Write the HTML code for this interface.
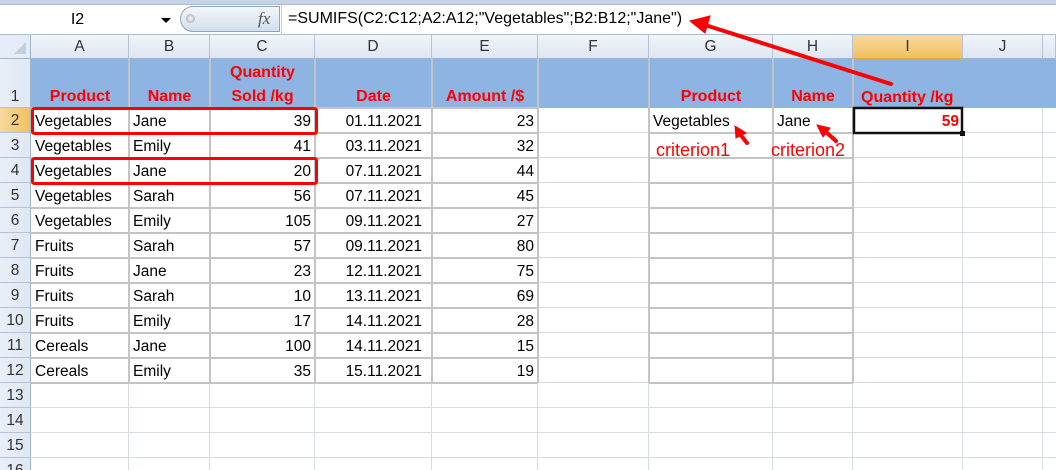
<!DOCTYPE html>
<html><head><meta charset="utf-8"><style>
*{margin:0;padding:0;box-sizing:border-box}
html,body{width:1056px;height:470px;overflow:hidden}
body{background:#fff;font-family:"Liberation Sans",Arial,sans-serif;position:relative}
.a{position:absolute}
.t{position:absolute;font-size:15.5px;line-height:25px;white-space:nowrap;color:#000}
.r{text-align:right}
.h{position:absolute;top:35px;height:24px;background:linear-gradient(#f1f5fb,#dde6f2);border-right:1px solid #b6c3d6;border-bottom:1px solid #9eb6ce;font-size:15.5px;line-height:24px;text-align:center;color:#333}
.rh{position:absolute;left:0;width:31px;background:linear-gradient(90deg,#e9eff8,#dfe7f3);border-right:1px solid #9eb6ce;border-bottom:1px solid #b6c3d6;font-size:15.5px;text-align:center;color:#333}
.hd{position:absolute;font-size:16px;font-weight:bold;color:#f00;text-align:center;line-height:25px}
.vl{position:absolute;width:1px;background:#d6dbe5}
.hl{position:absolute;height:1px;background:#d6dbe5;left:31px;right:0}
</style></head><body>
<div class="a" style="left:0;top:0;width:1056px;height:5px;background:#c5d3e6;border-bottom:1px solid #a9bdd6"></div>
<div class="a" style="left:0;top:5px;width:1056px;height:30px;background:#fff;border-bottom:1px solid #a9bdd6"></div>
<div class="t" style="left:0;top:7px;width:155px;text-align:center;line-height:26px;font-size:16px">I2</div>
<div class="a" style="left:161px;top:18px;width:0;height:0;border-left:5px solid transparent;border-right:5px solid transparent;border-top:5px solid #000"></div>
<div class="a" style="left:180px;top:6px;width:100px;height:26px;border:1px solid #8ea4c0;border-radius:13px 0 0 13px;background:linear-gradient(#f4f7fb,#d3deec)"></div>
<div class="a" style="left:186px;top:14px;width:9px;height:9px;border-radius:50%;background:radial-gradient(#fff,#999)"></div>
<div class="a" style="left:258px;top:7px;font-family:'Liberation Serif',serif;font-style:italic;font-size:17px;color:#555;line-height:24px">fx</div>
<div class="a" style="left:281px;top:5px;width:1px;height:30px;background:#c8d3e0"></div>
<div class="t" style="left:288px;top:6px;line-height:26px;font-size:16px">=SUMIFS(C2:C12;A2:A12;"Vegetables";B2:B12;"Jane")</div>

<div class="a" style="left:0;top:35px;width:31px;height:24px;background:#e4ecf7;border-right:1px solid #9eb6ce;border-bottom:1px solid #9eb6ce"></div>
<div class="a" style="left:14px;top:42px;width:0;height:0;border-left:12px solid transparent;border-bottom:12px solid #c3cfdf"></div>
<div class="h" style="left:31px;width:98px">A</div>
<div class="h" style="left:129px;width:81px">B</div>
<div class="h" style="left:210px;width:105px">C</div>
<div class="h" style="left:315px;width:117px">D</div>
<div class="h" style="left:432px;width:106px">E</div>
<div class="h" style="left:538px;width:111px">F</div>
<div class="h" style="left:649px;width:124px">G</div>
<div class="h" style="left:773px;width:80px">H</div>
<div class="h" style="left:853px;width:110px;background:linear-gradient(#f9d99f,#f1c15f);border-bottom:1px solid #e4a83c">I</div>
<div class="h" style="left:963px;width:80px">J</div>
<div class="h" style="left:1043px;width:13px"></div>

<div class="rh" style="top:59px;height:49px;line-height:76px">1</div>
<div class="rh" style="top:108px;height:25px;line-height:26px;background:linear-gradient(90deg,#f9d99f,#f1c15f)">2</div>
<div class="rh" style="top:133px;height:25px;line-height:26px">3</div>
<div class="rh" style="top:158px;height:25px;line-height:26px">4</div>
<div class="rh" style="top:183px;height:25px;line-height:26px">5</div>
<div class="rh" style="top:208px;height:25px;line-height:26px">6</div>
<div class="rh" style="top:233px;height:25px;line-height:26px">7</div>
<div class="rh" style="top:258px;height:25px;line-height:26px">8</div>
<div class="rh" style="top:283px;height:25px;line-height:26px">9</div>
<div class="rh" style="top:308px;height:25px;line-height:26px">10</div>
<div class="rh" style="top:333px;height:25px;line-height:26px">11</div>
<div class="rh" style="top:358px;height:25px;line-height:26px">12</div>
<div class="rh" style="top:383px;height:25px;line-height:26px">13</div>
<div class="rh" style="top:408px;height:25px;line-height:26px">14</div>
<div class="rh" style="top:433px;height:25px;line-height:26px">15</div>
<div class="rh" style="top:458px;height:25px;line-height:26px;border-bottom:none">16</div>

<div class="vl" style="left:128px;top:59px;height:411px"></div>
<div class="vl" style="left:209px;top:59px;height:411px"></div>
<div class="vl" style="left:314px;top:59px;height:411px"></div>
<div class="vl" style="left:431px;top:59px;height:411px"></div>
<div class="vl" style="left:537px;top:59px;height:411px"></div>
<div class="vl" style="left:648px;top:59px;height:411px"></div>
<div class="vl" style="left:772px;top:59px;height:411px"></div>
<div class="vl" style="left:852px;top:59px;height:411px"></div>
<div class="vl" style="left:962px;top:59px;height:411px"></div>
<div class="vl" style="left:1042px;top:59px;height:411px"></div>
<div class="hl" style="top:132px"></div><div class="hl" style="top:157px"></div><div class="hl" style="top:182px"></div>
<div class="hl" style="top:207px"></div><div class="hl" style="top:232px"></div><div class="hl" style="top:257px"></div>
<div class="hl" style="top:282px"></div><div class="hl" style="top:307px"></div><div class="hl" style="top:332px"></div>
<div class="hl" style="top:357px"></div><div class="hl" style="top:382px"></div><div class="hl" style="top:407px"></div>
<div class="hl" style="top:432px"></div><div class="hl" style="top:457px"></div>

<div class="a" style="left:31px;top:59px;width:1025px;height:49px;background:#8db4e2"></div>

<svg class="a" style="left:0;top:0" width="1056" height="470">
<g stroke="#c4c4c4" stroke-width="2" fill="none">
<path d="M129 59V383M210 59V383M315 59V383M432 59V383M538 59V383"/>
<path d="M31 108H538M31 133H538M31 158H538M31 183H538M31 208H538M31 233H538M31 258H538M31 283H538M31 308H538M31 333H538M31 358H538M31 383H538"/>
<path d="M649 59V383M773 59V383M853 59V383"/>
<path d="M649 133H853M649 158H853M649 183H853M649 208H853M649 233H853M649 258H853M649 283H853M649 308H853M649 333H853M649 358H853M649 383H853"/>
</g>
</svg>

<div class="hd" style="left:31px;top:84px;width:98px">Product</div>
<div class="hd" style="left:129px;top:84px;width:81px">Name</div>
<div class="hd" style="left:210px;top:60px;width:105px">Quantity</div>
<div class="hd" style="left:210px;top:84px;width:105px">Sold /kg</div>
<div class="hd" style="left:315px;top:84px;width:117px">Date</div>
<div class="hd" style="left:432px;top:84px;width:106px">Amount /$</div>
<div class="hd" style="left:649px;top:84px;width:124px">Product</div>
<div class="hd" style="left:773px;top:84px;width:80px">Name</div>
<div class="hd" style="left:853px;top:85px;width:110px;text-align:left;padding-left:8px">Quantity /kg</div>

<div class="t" style="left:35px;top:109px">Vegetables</div><div class="t" style="left:133px;top:109px">Jane</div><div class="t r" style="left:210px;top:109px;width:101px">39</div><div class="t r" style="left:315px;top:109px;width:107px">01.11.2021</div><div class="t r" style="left:432px;top:109px;width:102px">23</div>
<div class="t" style="left:35px;top:134px">Vegetables</div><div class="t" style="left:133px;top:134px">Emily</div><div class="t r" style="left:210px;top:134px;width:101px">41</div><div class="t r" style="left:315px;top:134px;width:107px">03.11.2021</div><div class="t r" style="left:432px;top:134px;width:102px">32</div>
<div class="t" style="left:35px;top:159px">Vegetables</div><div class="t" style="left:133px;top:159px">Jane</div><div class="t r" style="left:210px;top:159px;width:101px">20</div><div class="t r" style="left:315px;top:159px;width:107px">07.11.2021</div><div class="t r" style="left:432px;top:159px;width:102px">44</div>
<div class="t" style="left:35px;top:184px">Vegetables</div><div class="t" style="left:133px;top:184px">Sarah</div><div class="t r" style="left:210px;top:184px;width:101px">56</div><div class="t r" style="left:315px;top:184px;width:107px">07.11.2021</div><div class="t r" style="left:432px;top:184px;width:102px">45</div>
<div class="t" style="left:35px;top:209px">Vegetables</div><div class="t" style="left:133px;top:209px">Emily</div><div class="t r" style="left:210px;top:209px;width:101px">105</div><div class="t r" style="left:315px;top:209px;width:107px">09.11.2021</div><div class="t r" style="left:432px;top:209px;width:102px">27</div>
<div class="t" style="left:35px;top:234px">Fruits</div><div class="t" style="left:133px;top:234px">Sarah</div><div class="t r" style="left:210px;top:234px;width:101px">57</div><div class="t r" style="left:315px;top:234px;width:107px">09.11.2021</div><div class="t r" style="left:432px;top:234px;width:102px">80</div>
<div class="t" style="left:35px;top:259px">Fruits</div><div class="t" style="left:133px;top:259px">Jane</div><div class="t r" style="left:210px;top:259px;width:101px">23</div><div class="t r" style="left:315px;top:259px;width:107px">12.11.2021</div><div class="t r" style="left:432px;top:259px;width:102px">75</div>
<div class="t" style="left:35px;top:284px">Fruits</div><div class="t" style="left:133px;top:284px">Sarah</div><div class="t r" style="left:210px;top:284px;width:101px">10</div><div class="t r" style="left:315px;top:284px;width:107px">13.11.2021</div><div class="t r" style="left:432px;top:284px;width:102px">69</div>
<div class="t" style="left:35px;top:309px">Fruits</div><div class="t" style="left:133px;top:309px">Emily</div><div class="t r" style="left:210px;top:309px;width:101px">17</div><div class="t r" style="left:315px;top:309px;width:107px">14.11.2021</div><div class="t r" style="left:432px;top:309px;width:102px">28</div>
<div class="t" style="left:35px;top:334px">Cereals</div><div class="t" style="left:133px;top:334px">Jane</div><div class="t r" style="left:210px;top:334px;width:101px">100</div><div class="t r" style="left:315px;top:334px;width:107px">14.11.2021</div><div class="t r" style="left:432px;top:334px;width:102px">15</div>
<div class="t" style="left:35px;top:359px">Cereals</div><div class="t" style="left:133px;top:359px">Emily</div><div class="t r" style="left:210px;top:359px;width:101px">35</div><div class="t r" style="left:315px;top:359px;width:107px">15.11.2021</div><div class="t r" style="left:432px;top:359px;width:102px">19</div>

<div class="t" style="left:653px;top:109px">Vegetables</div>
<div class="t" style="left:777px;top:109px">Jane</div>
<div class="t r" style="left:853px;top:109px;width:106px;color:#f00;font-weight:bold">59</div>
<div class="t" style="left:656px;top:138px;color:#f00;font-size:18px">criterion1</div>
<div class="t" style="left:771px;top:138px;color:#f00;font-size:18px">criterion2</div>

<svg class="a" style="left:0;top:0" width="1056" height="470">
<rect x="854" y="108" width="108" height="25" fill="none" stroke="#111" stroke-width="2.5"/>
<rect x="960" y="131" width="5" height="5" fill="#111"/>
<rect x="32.5" y="108.5" width="284" height="25" rx="2" fill="none" stroke="#f00" stroke-width="3"/>
<rect x="32.5" y="158.5" width="284" height="25" rx="2" fill="none" stroke="#f00" stroke-width="3"/>
<g stroke="#f00" stroke-width="4" fill="#f00" stroke-linecap="round">
<line x1="891" y1="84" x2="705" y2="25"/>
<polygon points="690,21 710,16 705,33" stroke-width="1"/>
<line x1="747" y1="143" x2="740" y2="134"/>
<polygon points="735,126 746,133 736,138" stroke-width="1"/>
<line x1="836" y1="141" x2="826" y2="132"/>
<polygon points="817,125 830,128 823,137" stroke-width="1"/>
</g>
</svg>
</body></html>
